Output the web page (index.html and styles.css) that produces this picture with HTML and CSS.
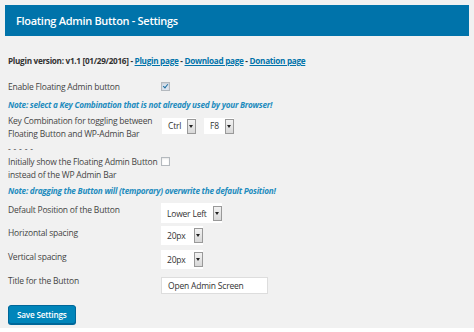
FILE: index.html
```html
<!DOCTYPE html>
<html>
<head>
<meta charset="utf-8">
<title>Floating Admin Button - Settings</title>
<link rel="stylesheet" href="styles.css">
</head>
<body>
<div id="wrap">
<h1 class="title">Floating Admin Button - Settings</h1>
<p class="version">Plugin version: v1.1 [01/29/2016] - <a href="#">Plugin page</a> - <a href="#">Download page</a> - <a href="#">Donation page</a></p>
<form class="settings">
<div class="row row-enable">
<label class="lbl">Enable Floating Admin button</label>
<span class="check checked"></span>
</div>
<p class="note">Note: select a Key Combination that is not already used by your Browser!</p>
<div class="row row-keys">
<label class="lbl">Key Combination for toggling between Floating Button and WP-Admin Bar</label>
<span class="sel sel-ctrl">Ctrl<i class="arr"></i></span>
<span class="sel sel-f8">F8<i class="arr"></i></span>
</div>
<p class="dashes">- - - - -</p>
<div class="row row-init">
<label class="lbl">Initially show the Floating Admin Button instead of the WP Admin Bar</label>
<span class="check"></span>
</div>
<p class="note note2">Note: dragging the Button will (temporary) overwrite the default Position!</p>
<div class="row row-pos">
<label class="lbl">Default Position of the Button</label>
<span class="sel sel-pos">Lower Left<i class="arr"></i></span>
</div>
<div class="row row-sp">
<label class="lbl">Horizontal spacing</label>
<span class="sel sel-px">20px<i class="arr"></i></span>
</div>
<div class="row row-sp row-sp2">
<label class="lbl">Vertical spacing</label>
<span class="sel sel-px">20px<i class="arr"></i></span>
</div>
<div class="row row-title">
<label class="lbl">Title for the Button</label>
<span class="txt">Open Admin Screen</span>
</div>
<a href="#" class="btn">Save Settings</a>
</form>
</div>
</body>
</html>
```

FILE: styles.css
```css
html, body { margin: 0; padding: 0; background: #fff; }
body { font-family: "Open Sans", Arial, sans-serif; color: #444; font-size: 8.5px; letter-spacing: -0.2px; }
#wrap { width: 474px; height: 328px; background: #f1f1f1; padding: 5px 5px 0 5px; box-sizing: border-box; }
.title { margin: 0; height: 31px; background: #0073aa; color: #fff; font-size: 11px; letter-spacing: -0.3px; font-weight: 600; line-height: 31px; padding-left: 11px; }
.version { margin: 19px 0 0 3px; font-weight: 700; font-size: 8.2px; letter-spacing: -0.3px; color: #333; line-height: 12px; }
.version a { color: #0073aa; }
.settings { margin: 0 0 0 3px; }
.row { display: flex; align-items: flex-start; }
.lbl { display: block; width: 153px; line-height: 13px; }
.row-enable { margin-top: 13px; }
.check { display: block; width: 7px; height: 7px; border: 1px solid #b4b9be; background: #fff; box-shadow: inset 0 1px 2px rgba(0,0,0,.1); margin-top: 1.5px; position: relative; }
.checked { background: #dde4ee; }
.checked:after { content: ""; position: absolute; left: 2px; top: 0; width: 2px; height: 4px; border: solid #1e6fa0; border-width: 0 1px 1px 0; transform: rotate(40deg); }
.note { margin: 5px 0 0 0; color: #1e8cbe; font-weight: 700; font-style: italic; line-height: 13px; font-size: 8.2px; letter-spacing: -0.25px; }
.row-keys { margin-top: 3px; }
.sel { display: flex; align-items: center; position: relative; background: #fff; height: 16px; padding-left: 6px; box-sizing: border-box; color: #333; }
.arr { position: absolute; right: 0; top: 1px; width: 7px; height: 13px; background: linear-gradient(#f2f2f2, #d8d8d8); border: 1px solid #999; }
.arr:after { content: ""; position: absolute; left: 1px; top: 5px; border-left: 2.5px solid transparent; border-right: 2.5px solid transparent; border-top: 3px solid #222; }
.sel-ctrl { width: 34px; margin-top: 3.5px; margin-left: 1px; }
.sel-f8 { width: 30px; margin-left: 8px; margin-top: 3.5px; }
.dashes { margin: 2px 0 0 0; line-height: 13px; letter-spacing: 0.3px; }
.row-init .check { margin-top: 1.5px; }
.note2 { margin-top: 3px; }
.row-pos { margin-top: 6px; }
.sel-pos { width: 61px; height: 20px; }
.sel-pos .arr { top: 3px; }
.row-sp { margin-top: 3px; }
.row-sp2 { margin-top: 5px; }
.sel-px { width: 42px; height: 19px; }
.sel-px .arr { top: 2px; }
.row-title { margin-top: 5px; }
.txt { display: block; width: 107px; height: 17px; background: #fff; border: 1px solid #ddd; box-sizing: border-box; padding-left: 6px; line-height: 15px; color: #333; margin-top: 3px; }
.btn { display: inline-block; margin-top: 11px; background: #0085ba; border: 1px solid #006799; border-radius: 3px; color: #fff; font-weight: 600; text-decoration: none; padding: 0 8px; height: 19px; line-height: 18px; box-sizing: border-box; box-shadow: 0 1px 0 #006799; font-size: 8.2px; }
```
